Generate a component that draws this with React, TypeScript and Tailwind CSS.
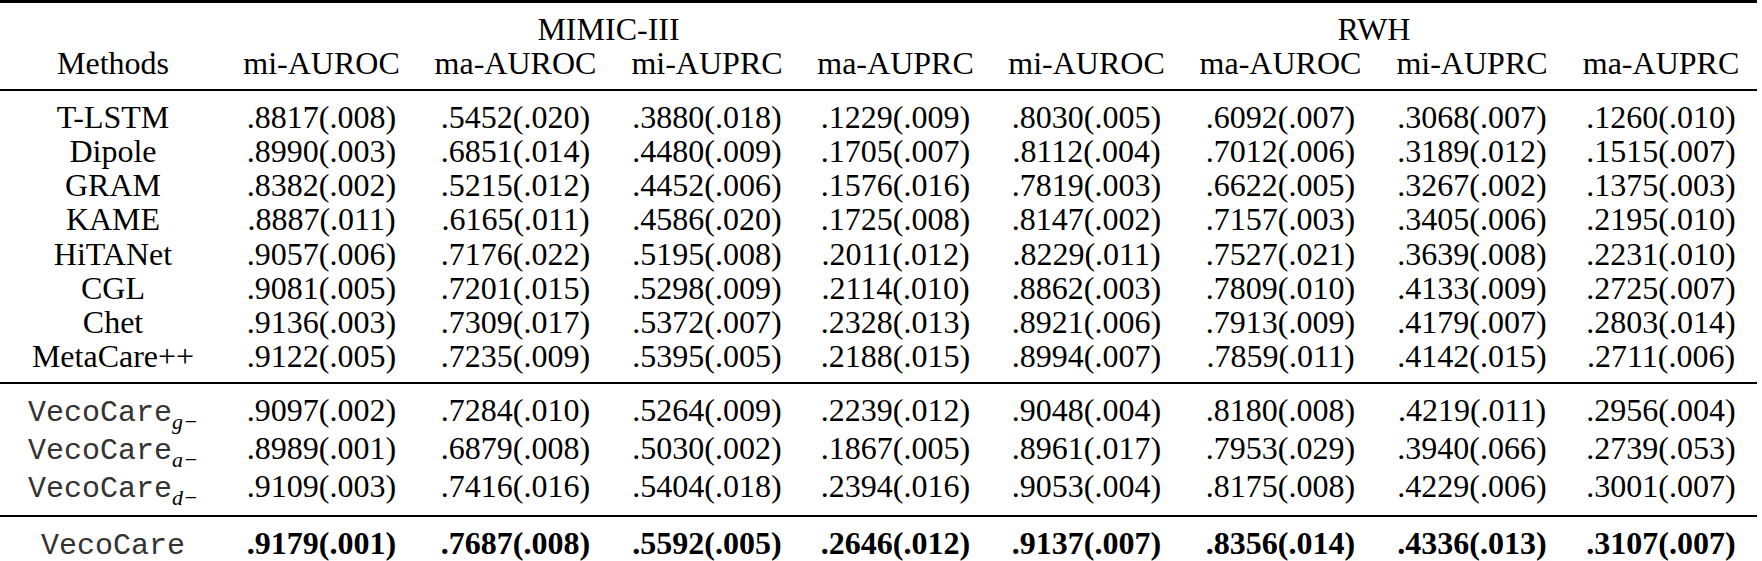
const cols = "grid grid-cols-[226px_191px_197px_186px_191px_191px_197px_186px_192px]";

type Row = { name: string; sub?: string; mono?: boolean; bold?: boolean; vals: string[] };

const baselines: Row[] = [
  { name: "T-LSTM", vals: [".8817(.008)", ".5452(.020)", ".3880(.018)", ".1229(.009)", ".8030(.005)", ".6092(.007)", ".3068(.007)", ".1260(.010)"] },
  { name: "Dipole", vals: [".8990(.003)", ".6851(.014)", ".4480(.009)", ".1705(.007)", ".8112(.004)", ".7012(.006)", ".3189(.012)", ".1515(.007)"] },
  { name: "GRAM", vals: [".8382(.002)", ".5215(.012)", ".4452(.006)", ".1576(.016)", ".7819(.003)", ".6622(.005)", ".3267(.002)", ".1375(.003)"] },
  { name: "KAME", vals: [".8887(.011)", ".6165(.011)", ".4586(.020)", ".1725(.008)", ".8147(.002)", ".7157(.003)", ".3405(.006)", ".2195(.010)"] },
  { name: "HiTANet", vals: [".9057(.006)", ".7176(.022)", ".5195(.008)", ".2011(.012)", ".8229(.011)", ".7527(.021)", ".3639(.008)", ".2231(.010)"] },
  { name: "CGL", vals: [".9081(.005)", ".7201(.015)", ".5298(.009)", ".2114(.010)", ".8862(.003)", ".7809(.010)", ".4133(.009)", ".2725(.007)"] },
  { name: "Chet", vals: [".9136(.003)", ".7309(.017)", ".5372(.007)", ".2328(.013)", ".8921(.006)", ".7913(.009)", ".4179(.007)", ".2803(.014)"] },
  { name: "MetaCare++", vals: [".9122(.005)", ".7235(.009)", ".5395(.005)", ".2188(.015)", ".8994(.007)", ".7859(.011)", ".4142(.015)", ".2711(.006)"] },
];

const ablations: Row[] = [
  { name: "VecoCare", sub: "g", mono: true, vals: [".9097(.002)", ".7284(.010)", ".5264(.009)", ".2239(.012)", ".9048(.004)", ".8180(.008)", ".4219(.011)", ".2956(.004)"] },
  { name: "VecoCare", sub: "a", mono: true, vals: [".8989(.001)", ".6879(.008)", ".5030(.002)", ".1867(.005)", ".8961(.017)", ".7953(.029)", ".3940(.066)", ".2739(.053)"] },
  { name: "VecoCare", sub: "d", mono: true, vals: [".9109(.003)", ".7416(.016)", ".5404(.018)", ".2394(.016)", ".9053(.004)", ".8175(.008)", ".4229(.006)", ".3001(.007)"] },
];

const ours: Row[] = [
  { name: "VecoCare", mono: true, bold: true, vals: [".9179(.001)", ".7687(.008)", ".5592(.005)", ".2646(.012)", ".9137(.007)", ".8356(.014)", ".4336(.013)", ".3107(.007)"] },
];

const metrics = ["mi-AUROC", "ma-AUROC", "mi-AUPRC", "ma-AUPRC", "mi-AUROC", "ma-AUROC", "mi-AUPRC", "ma-AUPRC"];

function Method({ row }: { row: Row }) {
  if (!row.mono) return <div className="text-center">{row.name}</div>;
  return (
    <div className="text-center whitespace-nowrap">
      <span className="font-['Liberation_Mono',monospace] text-[30px] text-[#333]">{row.name}</span>
      {row.sub && (
        <span className="relative top-[8px] italic text-[22px]">
          {row.sub}−
        </span>
      )}
    </div>
  );
}

function Block({ rows }: { rows: Row[] }) {
  return (
    <div className={`${cols} pt-[9px] pb-[8px]`}>
      {rows.map((r, i) => (
        <div key={i} className="contents">
          <Method row={r} />
          {r.vals.map((v, j) => (
            <div key={j} className={`text-center ${r.bold ? "font-bold" : ""}`}>
              {v}
            </div>
          ))}
        </div>
      ))}
    </div>
  );
}

export default function App() {
  return (
    <div className="w-[1762px] h-[561px] bg-white text-black font-['Liberation_Serif',serif] text-[32px] leading-[34.25px]">
      <div className="w-[1757px]">
        <div className="h-[3px] bg-black" />
        <div className={`${cols} pt-[9px] pb-[8px]`}>
          <div />
          <div className="col-span-4 text-center">MIMIC-III</div>
          <div className="col-span-4 text-center">RWH</div>
          <div className="text-center">Methods</div>
          {metrics.map((m, i) => (
            <div key={i} className="text-center">
              {m}
            </div>
          ))}
        </div>
        <div className="h-[2px] bg-black" />
        <Block rows={baselines} />
        <div className="h-[2px] bg-black" />
        <Block rows={ablations} />
        <div className="h-[2px] bg-black" />
        <Block rows={ours} />
        <div className="h-[3px] bg-black" />
      </div>
    </div>
  );
}
